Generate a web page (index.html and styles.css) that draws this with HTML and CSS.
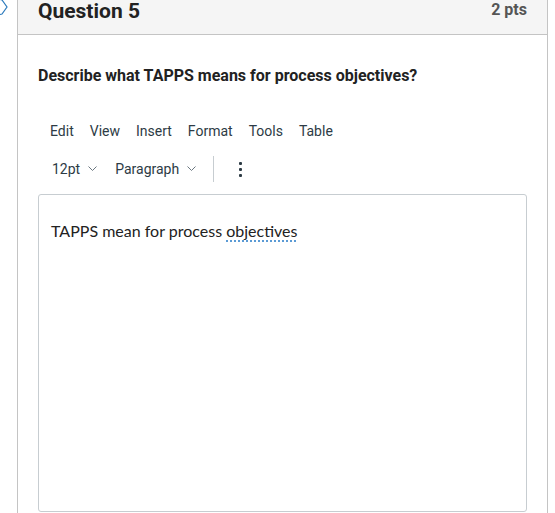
FILE: index.html
```html
<!DOCTYPE html>
<html>
<head>
<meta charset="utf-8">
<link rel="stylesheet" href="styles.css">
</head>
<body>
<div class="page">
  <svg class="flag" width="10" height="16" viewBox="0 0 10 16"><polyline points="-2,-1 2,0 7,7 2,14 -2,15" fill="none" stroke="#2b7abc" stroke-width="1.2"/></svg>
  <div class="card">
    <div class="card-header">
      <span class="q-title">Question 5</span>
      <span class="q-pts">2 pts</span>
    </div>
    <div class="card-body">
      <p class="q-text">Describe what TAPPS means for process objectives?</p>
      <div class="menubar">
        <span>Edit</span><span>View</span><span>Insert</span><span>Format</span><span>Tools</span><span>Table</span>
      </div>
      <div class="toolbar">
        <span class="tb-item">12pt <svg class="chev" width="9" height="6" viewBox="0 0 9 6"><polyline points="0.5,0.5 4.5,4.5 8.5,0.5" fill="none" stroke="#6b7780" stroke-width="1"/></svg></span>
        <span class="tb-item">Paragraph <svg class="chev" width="9" height="6" viewBox="0 0 9 6"><polyline points="0.5,0.5 4.5,4.5 8.5,0.5" fill="none" stroke="#6b7780" stroke-width="1"/></svg></span>
        <span class="tb-sep"></span>
        <span class="kebab"><i></i><i></i><i></i></span>
      </div>
      <div class="editor">
        <p>TAPPS mean for process <span class="spell">objectives</span></p>
      </div>
    </div>
  </div>
</div>
</body>
</html>
```
FILE: styles.css
```css
html, body { margin: 0; padding: 0; background: #fff; }
body { width: 555px; height: 513px; overflow: hidden; font-family: Roboto, "Liberation Sans", sans-serif; }
.page { position: relative; padding-left: 17px; padding-right: 7px; }
.flag { position: absolute; left: 0; top: 0; }
.card { border-left: 1px solid #c4c4c4; border-right: 1px solid #c4c4c4; height: 513px; box-sizing: border-box; }
.card-header { background: #f5f5f5; border-bottom: 1px solid #c4c4c4; height: 35px; box-sizing: border-box; display: flex; justify-content: space-between; align-items: flex-start; padding: 0 20px 0 20px; }
.q-title { font-weight: 700; font-size: 21px; color: #222; line-height: 24px; margin-top: -1px; }
.q-pts { font-weight: 700; font-size: 16px; color: #555; line-height: 18px; margin-top: 1px; }
.card-body { padding: 0 20px; }
.q-text { margin: 31px 0 0; font-weight: 700; font-size: 16px; color: #222; line-height: 20px; }
.menubar { display: flex; margin-top: 37px; padding-left: 12px; font-size: 14px; color: #2d3b45; line-height: 16px; }
.menubar span { margin-right: 16px; }
.toolbar { display: flex; align-items: center; margin-top: 17px; padding-left: 14px; font-size: 14px; color: #2d3b45; height: 26px; }
.tb-item { display: inline-flex; align-items: center; margin-right: 18px; }
.chev { margin-left: 8px; }
.tb-sep { width: 1px; height: 26px; background: #c7cdd1; margin-left: -1px; margin-right: 25px; }
.kebab { display: inline-flex; flex-direction: column; gap: 3px; }
.kebab i { display: block; width: 3px; height: 3px; background: #2d3b45; border-radius: 1px; }
.editor { margin-top: 12px; border: 1px solid #c7cdd1; border-radius: 3px; height: 318px; box-sizing: border-box; padding: 0 12px; }
.editor p { margin: 26px 0 0; font-family: Lato, sans-serif; font-size: 16px; color: #222; line-height: 20px; }
.spell { text-decoration: underline dotted #5b9bd5; text-decoration-thickness: 1.5px; text-underline-offset: 3px; }
```
